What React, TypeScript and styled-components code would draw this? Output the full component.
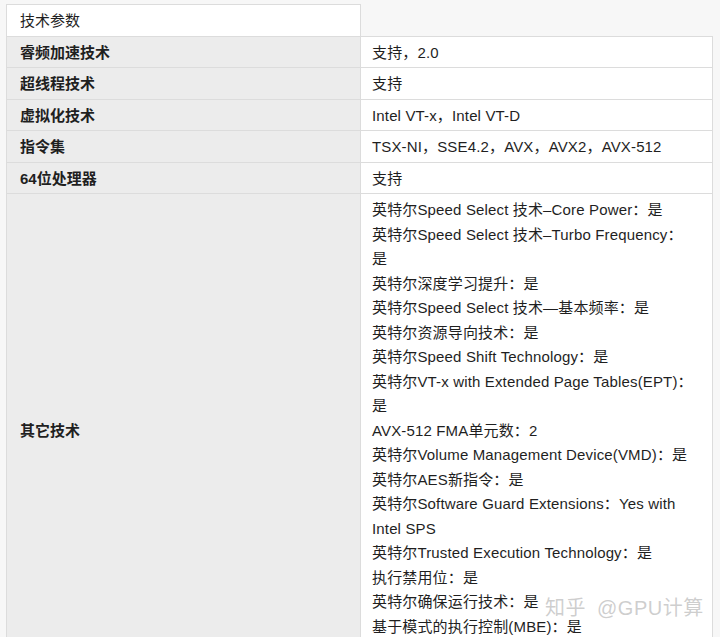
import React from "react";
import styled, { createGlobalStyle } from "styled-components";

const Global = createGlobalStyle`
  html, body { margin: 0; padding: 0; background: #f7f7f7; }
  body {
    font-family: "Liberation Sans", "Noto Sans CJK SC", sans-serif;
    color: #1f1f1f;
    -webkit-font-smoothing: antialiased;
  }
`;

const Page = styled.div`
  position: relative;
  padding: 4px 8px 0 6px;
`;

const Table = styled.table`
  border-collapse: collapse;
  width: 706px;
  table-layout: fixed;
  font-size: 15px;
  line-height: 24.5px;
`;

const Cell = styled.td`
  border: 1px solid #dcdcdc;
  padding: 4px 12px 2px 13px;
  vertical-align: middle;
`;

const HeaderCell = styled(Cell)`
  background: #ffffff;
  font-weight: normal;
`;

const EmptyCell = styled.td`
  border: none;
  background: transparent;
`;

const LabelCell = styled(Cell)`
  background: #ececec;
  font-weight: bold;
`;

const ValueCell = styled(Cell)`
  background: #ffffff;
  padding-left: 11px;
  letter-spacing: 0.15px;
`;

const Line = styled.div`
  white-space: nowrap;
`;

const Watermark = styled.div`
  position: absolute;
  left: 545px;
  top: 592px;
  font-size: 20px;
  letter-spacing: 0.5px;
  color: rgba(185, 185, 185, 0.7);
  white-space: nowrap;
  pointer-events: none;
  word-spacing: 5px;
`;

const rows: [string, string][] = [
  ["睿频加速技术", "支持，2.0"],
  ["超线程技术", "支持"],
  ["虚拟化技术", "Intel VT-x，Intel VT-D"],
  ["指令集", "TSX-NI，SSE4.2，AVX，AVX2，AVX-512"],
  ["64位处理器", "支持"],
];

const otherLines = [
  "英特尔Speed Select 技术–Core Power：是",
  "英特尔Speed Select 技术–Turbo Frequency：",
  "是",
  "英特尔深度学习提升：是",
  "英特尔Speed Select 技术—基本频率：是",
  "英特尔资源导向技术：是",
  "英特尔Speed Shift Technology：是",
  "英特尔VT-x with Extended Page Tables(EPT)：",
  "是",
  "AVX-512 FMA单元数：2",
  "英特尔Volume Management Device(VMD)：是",
  "英特尔AES新指令：是",
  "英特尔Software Guard Extensions：Yes with",
  "Intel SPS",
  "英特尔Trusted Execution Technology：是",
  "执行禁用位：是",
  "英特尔确保运行技术：是",
  "基于模式的执行控制(MBE)：是",
  "英特尔Boot Guard：是",
];

export default function App() {
  return (
    <Page>
      <Global />
      <Table>
        <colgroup>
          <col style={{ width: 354 }} />
          <col style={{ width: 352 }} />
        </colgroup>
        <tbody>
          <tr>
            <HeaderCell>技术参数</HeaderCell>
            <EmptyCell />
          </tr>
          {rows.map(([k, v]) => (
            <tr key={k}>
              <LabelCell>{k}</LabelCell>
              <ValueCell>{v}</ValueCell>
            </tr>
          ))}
          <tr>
            <LabelCell>其它技术</LabelCell>
            <ValueCell>
              {otherLines.map((l, i) => (
                <Line key={i}>{l}</Line>
              ))}
            </ValueCell>
          </tr>
        </tbody>
      </Table>
      <Watermark>知乎 @GPU计算</Watermark>
    </Page>
  );
}
